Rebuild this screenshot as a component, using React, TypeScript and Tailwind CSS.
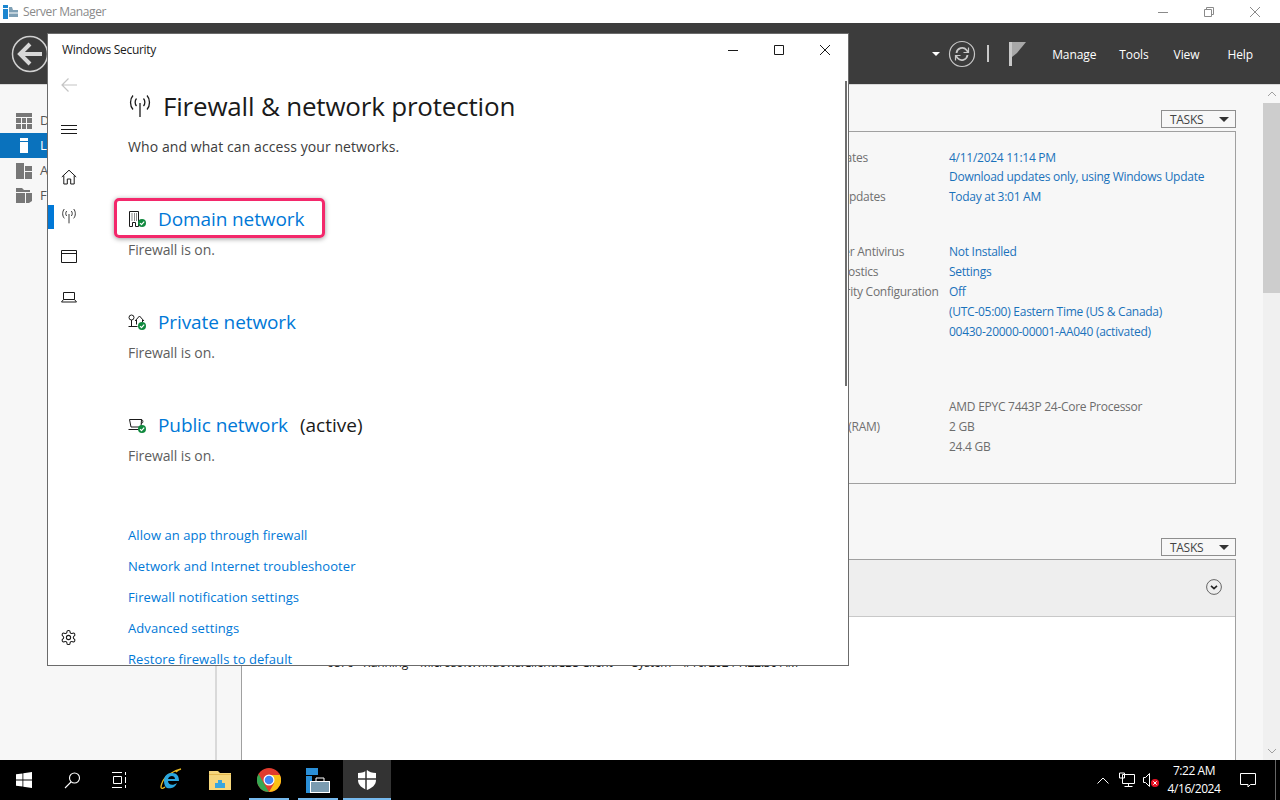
const SEGOE = "font-['Open_Sans','Noto_Sans',sans-serif]";

function Check({ x = 9, y = 9 }: { x?: number; y?: number }) {
  return (
    <g transform={`translate(${x} ${y})`}>
      <circle cx="4" cy="4" r="4" fill="#10893e" stroke="none" />
      <path d="M2 4.200 3.500 5.700 6.200 2.600" fill="none" stroke="#fff" strokeWidth="1.200" />
    </g>
  );
}

function DomainIcon() {
  return (
    <svg width="18" height="18" viewBox="0 0 18 18" fill="none" stroke="#1a1a1a" strokeWidth="1">
      <path d="M1.500 16.500V1.500h9v15H7.500v-4h-3v4z" />
      <path d="M3.500 4h1M6 4h1M8 4h1M3.500 6h1M6 6h1M8 6h1M3.500 8h1M6 8h1M8 8h1M3.500 10h1M6 10h1M8 10h1" strokeWidth="1.200" />
      <Check x={10} y={9} />
    </svg>
  );
}

function PrivateIcon() {
  return (
    <svg width="18" height="18" viewBox="0 0 18 18" fill="none" stroke="#1a1a1a" strokeWidth="1">
      <circle cx="3.500" cy="4.500" r="2.500" />
      <path d="M3.500 7v6M.5 13.500h9M7 8l4.500-5L16 8M8.500 7v4.500M14.500 7v2" />
      <Check x={10} y={9} />
    </svg>
  );
}

function PublicIcon() {
  return (
    <svg width="18" height="18" viewBox="0 0 18 18" fill="none" stroke="#1a1a1a" strokeWidth="1">
      <path d="M1.500 3.500h12l-.5 7.500H3z" />
      <path d="M.5 13.500h10" />
      <path d="M13 3.500c2.500 0 2.500 4 0 4" />
      <Check x={10} y={9} />
    </svg>
  );
}

function Antenna({ size = 24 }: { size?: number }) {
  return (
    <svg width={size} height={size} viewBox="0 0 24 24" fill="none" stroke="#1a1a1a" strokeWidth="1.300">
      <path d="M12 9v14" />
      <path d="M8.500 4.500c-1.800 2-1.800 5.500 0 7.500M15.500 4.500c1.800 2 1.800 5.500 0 7.500" />
      <path d="M5 1.500c-3.300 3.500-3.300 10.500 0 14M19 1.500c3.300 3.500 3.300 10.500 0 14" />
    </svg>
  );
}

function Gear() {
  return (
    <svg width="17" height="17" viewBox="0 0 24 24" fill="none" stroke="#1a1a1a" strokeWidth="1.500">
      <path d="M12.220 2h-.44a2 2 0 0 0-2 2v.18a2 2 0 0 1-1 1.730l-.43.25a2 2 0 0 1-2 0l-.15-.08a2 2 0 0 0-2.730.730l-.22.380a2 2 0 0 0 .730 2.730l.15.100a2 2 0 0 1 1 1.720v.510a2 2 0 0 1-1 1.740l-.15.090a2 2 0 0 0-.730 2.730l.22.380a2 2 0 0 0 2.730.730l.15-.08a2 2 0 0 1 2 0l.43.250a2 2 0 0 1 1 1.730V20a2 2 0 0 0 2 2h.44a2 2 0 0 0 2-2v-.18a2 2 0 0 1 1-1.730l.43-.25a2 2 0 0 1 2 0l.15.080a2 2 0 0 0 2.730-.730l.22-.390a2 2 0 0 0-.730-2.730l-.15-.08a2 2 0 0 1-1-1.740v-.500a2 2 0 0 1 1-1.740l.15-.090a2 2 0 0 0 .730-2.730l-.22-.380a2 2 0 0 0-2.730-.730l-.15.080a2 2 0 0 1-2 0l-.43-.250a2 2 0 0 1-1-1.730V4a2 2 0 0 0-2-2z" />
      <circle cx="12" cy="12" r="3" />
    </svg>
  );
}

function NetworkRow({ icon, name, active, mt }: { icon: React.ReactNode; name: string; active?: boolean; mt: string }) {
  return (
    <div className={mt}>
      <div className="flex h-[28px] items-center">
        <span className="flex w-[30px] shrink-0">{icon}</span>
        <span className="text-[19px] leading-[28px] tracking-[-0.1px] text-[#0078d7]">{name}</span>
        {active && <span className="ml-[12px] text-[19px] leading-[28px] text-[#1a1a1a]">(active)</span>}
      </div>
      <div className="mt-[7px] text-[14px] leading-[20px] tracking-[-0.1px] text-[#5d5d5d]">Firewall is on.</div>
    </div>
  );
}

function WindowsSecurity() {
  return (
    <div className="absolute left-[47px] top-[33px] flex h-[633px] w-[802px] flex-col overflow-hidden border border-[#6b6b6b] bg-white">
      <div className="flex h-[31px] shrink-0 items-center justify-between pl-[14px]">
        <span className="text-[12px] tracking-[-0.3px] text-[#1a1a1a]">Windows Security</span>
        <div className="flex items-center">
          <span className="flex w-[46px] justify-center">
            <svg width="12" height="12" fill="none" stroke="#1a1a1a"><path d="M1 6.500h10" /></svg>
          </span>
          <span className="flex w-[46px] justify-center">
            <svg width="12" height="12" fill="none" stroke="#1a1a1a"><path d="M1.500 1.500h9v9h-9z" /></svg>
          </span>
          <span className="flex w-[46px] justify-center">
            <svg width="12" height="12" fill="none" stroke="#1a1a1a"><path d="m1 1 10 10M11 1 1 11" /></svg>
          </span>
        </div>
      </div>
      <div className="flex min-h-0 flex-1">
        <div className="flex w-[41px] shrink-0 flex-col">
          <div className="flex h-[40px] items-center justify-center">
            <svg width="18" height="16" fill="none" stroke="#c4c4c4" strokeWidth="1.200"><path d="M17 8H2M8.500 1.500 2 8l6.500 6.500" /></svg>
          </div>
          <div className="flex h-[48px] items-center justify-center">
            <svg width="16" height="11" fill="none" stroke="#1a1a1a"><path d="M0 1.500h16M0 5.500h16M0 9.500h16" /></svg>
          </div>
          <div className="flex h-[48px] items-center justify-center">
            <svg width="16" height="16" viewBox="0 0 16 16" fill="none" stroke="#1a1a1a"><path d="M.8 8 8 1.200 15.200 8M2.800 6.500v8.500h3.500v-5h3.400v5h3.500V6.500" /></svg>
          </div>
          <div className="relative flex h-[30px] items-center justify-center">
            <span className="absolute left-0 top-[4px] h-[24px] w-[6px] bg-[#0078d7]" />
            <Antenna size={16} />
          </div>
          <div className="mt-[5px] flex h-[40px] items-center justify-center">
            <svg width="16" height="14" fill="none" stroke="#1a1a1a"><path d="M.5 1.500h15v12H.5zM.5 4.500h15" /></svg>
          </div>
          <div className="mt-[1px] flex h-[40px] items-center justify-center">
            <svg width="16" height="12" fill="none" stroke="#1a1a1a"><path d="M2.500 1.500h11v7h-11zM2.500 8.500l-2 2.500h15l-2-2.500" /></svg>
          </div>
          <div className="mt-auto mb-[19px] flex items-center justify-center"><Gear /></div>
        </div>
        <div className="relative min-w-0 flex-1 pl-[39px]">
          <div className="mt-[18px] flex h-[44px] items-center pt-[2px]">
            <span className="mr-[11px] flex"><Antenna size={24} /></span>
            <span className="text-[26px] leading-[36px] tracking-[-0.2px] text-[#1a1a1a]">Firewall &amp; network protection</span>
          </div>
          <div className="mt-[10px] text-[14px] leading-[20px] tracking-[0.08px] text-[#3c3c3c]">Who and what can access your networks.</div>
          <NetworkRow mt="mt-[48px]" icon={<DomainIcon />} name="Domain network" />
          <NetworkRow mt="mt-[48px]" icon={<PrivateIcon />} name="Private network" />
          <NetworkRow mt="mt-[48px]" icon={<PublicIcon />} name="Public network" active />
          <div className="mt-[59px] flex flex-col gap-[11px] text-[13px] leading-[20px] tracking-[0.07px] text-[#0078d7]">
            <span>Allow an app through firewall</span>
            <span>Network and Internet troubleshooter</span>
            <span>Firewall notification settings</span>
            <span>Advanced settings</span>
            <span>Restore firewalls to default</span>
          </div>
          <div className="absolute right-[1px] top-[16px] h-[305px] w-[2px] bg-[#6e6e6e]" />
        </div>
      </div>
      <div className="absolute left-[66px] top-[164px] h-[40px] w-[211px] rounded-[5px] border-[3px] border-[#f3286b] shadow-[0_1px_5px_rgba(0,0,0,0.4)]" />
    </div>
  );
}

function Tasks() {
  return (
    <div className="flex h-[18px] w-[75px] items-center border border-[#8e8e8e] pl-[8px] pt-[1px] text-[12px] text-[#444]">
      <span className="tracking-[-0.3px]">TASKS</span>
      <span className="ml-auto mr-[6px] h-0 w-0 border-x-[5px] border-t-[5px] border-x-transparent border-t-[#333]" />
    </div>
  );
}

function PropRow({ label, value, blue = true, mt = "" }: { label?: string; value: string; blue?: boolean; mt?: string }) {
  return (
    <div className={`flex h-[20px] items-center text-[12px] tracking-[-0.27px] ${mt}`}>
      <span className="-ml-[3px] w-[197px] shrink-0 whitespace-nowrap text-[#707070]">{label}</span>
      <span className={`whitespace-nowrap ${blue ? "text-[#1a72bb]" : "text-[#6d6d6d]"}`}>{value}</span>
    </div>
  );
}

function SideItem({ label, active, icon }: { label: string; active?: boolean; icon: React.ReactNode }) {
  return (
    <div className={`flex h-[25px] items-center gap-[8px] pl-[16px] text-[13px] ${active ? "bg-[#0a72bd] text-white" : "text-[#555]"}`}>
      <span className="flex w-[16px] justify-center">{icon}</span>
      <span className="whitespace-nowrap">{label}</span>
    </div>
  );
}

function TaskButton({ running, active, className = "", children }: { running?: boolean; active?: boolean; className?: string; children: React.ReactNode }) {
  return (
    <span className={`relative flex h-full w-[48px] shrink-0 items-center justify-center ${active ? "bg-[#333333]" : ""} ${className}`}>
      {children}
      {running && <span className={`absolute bottom-0 h-[2px] bg-[#76b9ed] ${active ? "inset-x-0" : "inset-x-[4px]"}`} />}
    </span>
  );
}

export default function App() {
  return (
    <div className={`relative flex h-[800px] w-[1280px] flex-col overflow-hidden bg-[#f7f7f7] ${SEGOE}`}>
      <div className="flex h-[23px] shrink-0 items-center bg-white pl-[3px]">
        <svg width="15" height="15" viewBox="0 0 15 15">
          <path d="M0 1h5v3H0zM0 5h5v10H0z" fill="#1c86d0" />
          <path d="M6 6V3h3l1 3h5v7H6z" fill="#7fa0b5" />
          <path d="M6 9h9" stroke="#fff" />
        </svg>
        <span className="ml-[5px] text-[12px] tracking-[-0.4px] text-[#8a8a8a]">Server Manager</span>
        <div className="ml-auto flex items-center pr-[2px]">
          <span className="flex w-[46px] justify-center"><svg width="12" height="12" fill="none" stroke="#8a8a8a"><path d="M1 6.500h10" /></svg></span>
          <span className="flex w-[46px] justify-center"><svg width="12" height="12" fill="none" stroke="#8a8a8a"><path d="M1.500 3.500h7v7h-7zM3.500 3.500v-2h7v7h-2" /></svg></span>
          <span className="flex w-[46px] justify-center"><svg width="12" height="12" fill="none" stroke="#8a8a8a"><path d="m1 1 10 10M11 1 1 11" /></svg></span>
        </div>
      </div>

      <div className="flex h-[62px] shrink-0 items-center border-b border-[#d8d8d8] bg-[#3c3c3c] pl-[11px] text-white">
        <svg width="38" height="38" viewBox="0 0 38 38" fill="none">
          <circle cx="19" cy="19" r="17.500" stroke="#d0d0d0" strokeWidth="1.500" />
          <path d="M31 19H10M19 9 9 19l10 10" stroke="#d8d8d8" strokeWidth="4" />
        </svg>
        <div className="ml-auto flex items-center">
          <span className="h-0 w-0 border-x-[4px] border-t-[4px] border-x-transparent border-t-white" />
          <svg className="ml-[8px]" width="28" height="28" viewBox="0 0 28 28" fill="none" stroke="#c8c8c8">
            <circle cx="14" cy="14" r="12.500" strokeWidth="1.200" />
            <path d="M8.500 13a5.700 5.700 0 0 1 10-3l1.500 2M19.500 15a5.700 5.700 0 0 1-10 3l-1.500-2" strokeWidth="1.800" />
            <path d="M20.500 7.500v5h-5M7.500 20.500v-5h5" strokeWidth="1.200" />
          </svg>
          <span className="ml-[11px] h-[17px] w-[2px] bg-[#c8c8c8]" />
          <svg className="ml-[18px]" width="20" height="26" viewBox="0 0 20 26">
            <path d="M2 1h3v24H2z" fill="#c8c8c8" />
            <path d="M5 1h14l-9 11-5 4z" fill="#a8a8a8" />
          </svg>
          <div className="ml-[25px] flex items-center pr-[27px] pt-[2px] text-[12px] tracking-[-0.1px] text-white">
            <span>Manage</span><span className="ml-[23px]">Tools</span><span className="ml-[25px]">View</span><span className="ml-[28px]">Help</span>
          </div>
        </div>
      </div>

      <div className="flex min-h-0 flex-1">
        <div className="w-[217px] shrink-0 border-r-2 border-[#d9d9d9] pt-[23px]">
          <SideItem label="Dashboard" icon={<svg width="16" height="16" fill="#777"><path d="M0 0h16v4H0zM0 5h5v5H0zM6 5h4v5H6zM11 5h5v5h-5zM0 11h5v5H0zM6 11h4v5H6zM11 11h5v5h-5z" /></svg>} />
          <SideItem label="Local Server" active icon={<svg width="8" height="15" fill="#fff"><path d="M0 0h8v3H0zM0 4h8v11H0z" /></svg>} />
          <SideItem label="All Servers" icon={<svg width="16" height="16" fill="#777"><path d="M0 0h8v16H0zM9 3h7v5H9zM9 9h7v7H9z" /></svg>} />
          <SideItem label="File and Storage Services" icon={<svg width="16" height="15" fill="#777"><path d="M0 0h6l2 2h6v2H0zM0 5h9v10H0zM10 5h6v8l-3 2h-3z" /></svg>} />
        </div>

        <div className="flex min-w-0 flex-1 flex-col pl-[24px] pr-[27px] pt-[25px]">
          <div className="flex justify-end"><Tasks /></div>
          <div className="mt-[3px] h-[353px] shrink-0 overflow-hidden border border-[#a0a0a0] pl-[513px] pt-[16px]">
            <PropRow label="Last installed updates" value="4/11/2024 11:14 PM" />
            <PropRow label="" value="Download updates only, using Windows Update" mt="-mt-[1px]" />
            <PropRow label="Last checked for updates" value="Today at 3:01 AM" />
            <PropRow label="Windows Defender Antivirus" value="Not Installed" mt="mt-[35px]" />
            <PropRow label="Feedback & Diagnostics" value="Settings" />
            <PropRow label="IE Enhanced Security Configuration" value="Off" />
            <PropRow label="Time zone" value="(UTC-05:00) Eastern Time (US & Canada)" />
            <PropRow label="Product ID" value="00430-20000-00001-AA040 (activated)" />
            <PropRow label="Processors" value="AMD EPYC 7443P 24-Core Processor" blue={false} mt="mt-[55px]" />
            <PropRow label="Installed memory (RAM)" value="2 GB" blue={false} />
            <PropRow label="Total disk space" value="24.4 GB" blue={false} />
          </div>
          <div className="mt-[54px] flex justify-end"><Tasks /></div>
          <div className="mt-[3px] flex min-h-0 flex-1 flex-col border-x border-t border-[#a0a0a0]">
            <div className="flex h-[57px] shrink-0 items-center justify-end border-b border-[#c8c8c8] bg-[#eeeeee] pb-[2px] pr-[13px]">
              <svg width="16" height="16" fill="none"><circle cx="8" cy="8" r="7.400" stroke="#555" strokeWidth="0.900" /><path d="m5 6.800 3 2.800 3-2.800" stroke="#222" strokeWidth="1.600" /></svg>
            </div>
            <div className="flex flex-1 items-start bg-white pl-[85px] pt-[38px] text-[12px] leading-[16px] tracking-[-0.2px] whitespace-nowrap text-[#1a1a1a]">
              <span className="w-[36px]">6876</span>
              <span className="w-[57px]">Running</span>
              <span className="w-[212px]">MicrosoftWindows.Client.CBS Client</span>
              <span className="w-[48px]">System</span>
              <span>4/16/2024 7:22:30 AM</span>
            </div>
          </div>
        </div>

        <div className="flex w-[17px] shrink-0 flex-col items-center bg-[#f0f0f0]">
          <div className="flex h-[18px] w-full items-center justify-center bg-[#f7f7f7]">
            <svg width="10" height="6" fill="none" stroke="#a0a0a0"><path d="m1 5 4-4 4 4" /></svg>
          </div>
          <div className="h-[190px] w-full bg-[#cdcdcd]" />
          <div className="mt-auto flex h-[18px] w-full items-center justify-center">
            <svg width="10" height="6" fill="none" stroke="#a0a0a0"><path d="m1 1 4 4 4-4" /></svg>
          </div>
        </div>
      </div>

      <div className="flex h-[40px] shrink-0 items-center bg-black text-white">
        <TaskButton>
          <svg width="16" height="16" viewBox="0 0 16 16" fill="#fff"><path d="m0 2.300 6.500-.9v6.200H0zM7.300 1.300 16 0v7.600H7.300zM0 8.400h6.500v6.200L0 13.700zM7.300 8.400H16V16l-8.700-1.200z" /></svg>
        </TaskButton>
        <TaskButton>
          <svg width="17" height="17" fill="none" stroke="#fff" strokeWidth="1.100"><circle cx="10.500" cy="6" r="5" /><path d="M7 10 1 16" /></svg>
        </TaskButton>
        <TaskButton>
          <svg width="16" height="16" fill="none" stroke="#fff"><path d="M0 .5h10M0 15.500h10M1.500 4.500h8v7h-8zM13.500 0v3M13.500 5v6M13.500 13v3" /></svg>
        </TaskButton>
        <TaskButton className="ml-[3px]">
          <svg width="24" height="24" viewBox="0 0 24 24" fill="none">
            <path d="M6 19C2 22 1 20 3 15 5 9 13 3 22 1c-3 1-4 2-5 3" stroke="#e8b923" strokeWidth="1.300" />
            <path d="M5 13c0-5 3-8 8-8s7 3 7 8H9c0 4 5 5 9 2-2 5-7 6-10 5-2-1-3-4-3-7zm4-2h7c0-4-6-4-7 0z" fill="#2aa6de" />
          </svg>
        </TaskButton>
        <TaskButton className="ml-[1px]">
          <svg width="22" height="20" viewBox="0 0 22 20">
            <path d="M0 1h9l2 2h11v17H0z" fill="#f6d77c" />
            <path d="M0 4h22v1H0z" fill="#e5b94f" />
            <path d="M6 18v-5h3v-3h4v3h3v5z" fill="#35a6e0" />
          </svg>
        </TaskButton>
        <TaskButton running className="ml-[1px]">
          <svg width="24" height="24" viewBox="0 0 24 24">
            <circle cx="12" cy="12" r="12" fill="#e13b2e" />
            <path d="M12 24A12 12 0 0 1 1.600 6L7 15.500 12 24z" fill="#36a852" />
            <path d="M22.400 6A12 12 0 0 1 12 24l5-8.500L12 7h10.400z" fill="#fbc116" />
            <circle cx="12" cy="12" r="5.500" fill="#fff" />
            <circle cx="12" cy="12" r="4.300" fill="#4285f4" />
          </svg>
        </TaskButton>
        <TaskButton running className="ml-[1px]">
          <svg width="24" height="25" viewBox="0 0 24 25">
            <path d="M0 0h12v7H0zM0 8h6v17H0z" fill="#2a8fd8" />
            <path d="M4 13h20v12H4z" fill="#fff" />
            <path d="M5 14h18v10H5z" fill="#7a9bb0" />
            <path d="M10 13v-3h8v3" fill="none" stroke="#fff" />
          </svg>
        </TaskButton>
        <TaskButton running active className="ml-[1px]">
          <svg width="18" height="20" viewBox="0 0 18 20">
            <path d="M9 0c2 2 5 3 9 3v7c0 5-4 8-9 10-5-2-9-5-9-10V3c4 0 7-1 9-3z" fill="#fff" />
            <path d="M8 0v20M0 9h18" stroke="#333" strokeWidth="1.500" />
          </svg>
        </TaskButton>

        <div className="ml-auto flex h-full items-center">
          <svg width="12" height="7" fill="none" stroke="#fff"><path d="m.5 6.500 5.500-5.500 5.500 5.500" /></svg>
          <svg className="ml-[10px]" width="16" height="16" fill="none" stroke="#fff"><path d="M3.500 2.500h12v9h-12zM.5 1v5h5V1zM9.500 11.500v3M5.500 14.500h8" /></svg>
          <svg className="ml-[8px]" width="18" height="16" fill="none" stroke="#fff">
            <path d="M.5 5.500h2l4-4v13l-4-4h-2z" />
            <circle cx="12" cy="11" r="4" fill="#e81123" stroke="none" />
            <path d="m10.300 9.300 3.400 3.400M13.700 9.300l-3.400 3.400" strokeWidth="1" />
          </svg>
          <div className="ml-[2px] flex w-[62px] flex-col items-center text-[12px] leading-[18px] tracking-[-0.45px]">
            <span>7:22 AM</span>
            <span>4/16/2024</span>
          </div>
          <span className="mr-[4px] flex w-[46px] justify-center">
            <svg width="16" height="16" fill="none" stroke="#fff"><path d="M.5 1.500h15v11h-5l-2.500 2.500v-2.500H.5z" /></svg>
          </span>
          <span className="h-full w-[5px] border-l border-[#666]" />
        </div>
      </div>

      <WindowsSecurity />
    </div>
  );
}
